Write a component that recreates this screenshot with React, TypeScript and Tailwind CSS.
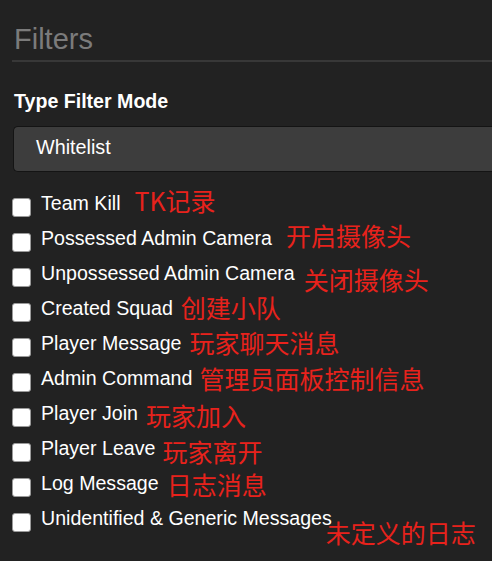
import React from "react";

type Row = { label: string; note: string; cls: string };

const rows: Row[] = [
  { label: "Team Kill", note: "TK记录", cls: "ml-[14px] top-[-3px]" },
  { label: "Possessed Admin Camera", note: "开启摄像头", cls: "ml-[14px] top-[-3px]" },
  { label: "Unpossessed Admin Camera", note: "关闭摄像头", cls: "ml-[9px] top-[6px]" },
  { label: "Created Squad", note: "创建小队", cls: "ml-[8px] top-[-1px]" },
  { label: "Player Message", note: "玩家聊天消息", cls: "ml-[8px] top-[-1px]" },
  { label: "Admin Command", note: "管理员面板控制信息", cls: "ml-[7px] top-[0px]" },
  { label: "Player Join", note: "玩家加入", cls: "ml-[8px] top-[2px]" },
  { label: "Player Leave", note: "玩家离开", cls: "ml-[7px] top-[3px]" },
  { label: "Log Message", note: "日志消息", cls: "ml-[8px] top-[1px]" },
  { label: "Unidentified & Generic Messages", note: "未定义的日志", cls: "ml-[-6px] top-[14px]" },
];

export default function App() {
  return (
    <div
      className="w-[492px] h-[561px] overflow-hidden bg-[#222222]"
      style={{ fontFamily: '"Liberation Sans", Arial, sans-serif' }}
    >
      <div className="pl-[14px] pt-[22px] h-[60px] text-[29px] leading-[34px] text-[#7b7b7b]">
        Filters
      </div>
      <div className="ml-[12px] h-[2px] bg-[#383838]" />
      <div className="pl-[14px] pt-[28px] text-[19.6px] leading-[22px] font-bold text-white">
        Type Filter Mode
      </div>
      <div className="ml-[13px] mt-[14px] h-[46px] rounded-l-[5px] border border-r-0 border-[#141414] bg-[#3d3d3d] pl-[22px] pb-[3px] flex items-center text-[19.8px] text-white">
        Whitelist
      </div>
      <div className="mt-[13px] flex flex-col">
        {rows.map((r) => (
          <div key={r.label} className="h-[35.1px] flex items-center pl-[12px]">
            <div className="w-[19px] h-[19px] mt-[9px] rounded-[3px] bg-white border border-[#9a9a9a] shrink-0" />
            <span className="ml-[10px] text-[19.6px] leading-[22px] text-white whitespace-nowrap">
              {r.label}
            </span>
            <span
              className={`relative ${r.cls} text-[25px] leading-[28px] text-[#e8221c] whitespace-nowrap`}
              style={{ fontFamily: '"Noto Sans CJK SC", "Liberation Sans", sans-serif' }}
            >
              {r.note}
            </span>
          </div>
        ))}
      </div>
    </div>
  );
}
